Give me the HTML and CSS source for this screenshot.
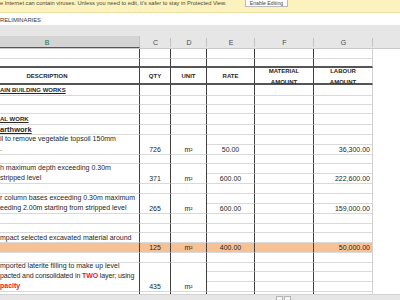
FILE: index.html
```html
<!DOCTYPE html>
<html>
<head>
<meta charset="utf-8">
<link rel="stylesheet" href="styles.css">
</head>
<body>
<div class="msgbar">
  <span class="msg">e Internet can contain viruses. Unless you need to edit, it's safer to stay in Protected View.</span>
  <span class="btn">Enable Editing</span>
</div>
<div class="fbar">RELIMINARIES</div>
<div class="band"></div>
<div class="colhdr">
  <div class="ch sel">B</div><div class="ch">C</div><div class="ch">D</div><div class="ch">E</div><div class="ch">F</div><div class="ch">G</div>
</div>
<div class="sheet">
  <div class="grid">
    <div></div><div></div><div></div><div></div><div></div><div class="g"></div>
    <div class="tb"></div><div class="tb"></div><div class="tb"></div><div class="tb"></div><div class="tb"></div><div class="tb g"></div>
    <div class="h tb">DESCRIPTION</div><div class="h tb">QTY</div><div class="h tb">UNIT</div><div class="h tb">RATE</div><div class="h tb">MATERIAL<br>AMOUNT</div><div class="h tb g">LABOUR<br>AMOUNT</div>

    <div class="d sec">AIN BUILDING WORKS</div><div></div><div></div><div></div><div></div><div class="g"></div>
    <div></div><div></div><div></div><div></div><div></div><div class="g"></div>
    <div></div><div></div><div></div><div></div><div></div><div class="g"></div>
    <div class="d sec">AL WORK</div><div></div><div></div><div></div><div></div><div class="g"></div>
    <div class="d sec big">arthwork</div><div></div><div></div><div></div><div></div><div class="g"></div>

    <div class="d s2 col"><p>il to remove vegetable topsoil 150mm</p><p>.</p></div><div class="s2">726</div><div class="s2">m²</div><div></div><div></div><div class="g"></div>
    <div>50.00</div><div></div><div class="g r">36,300.00</div>
    <div></div><div></div><div></div><div></div><div></div><div class="g"></div>

    <div class="d s2 col"><p>h maximum depth exceeding 0.30m</p><p>stripped level</p></div><div class="s2">371</div><div class="s2">m²</div><div></div><div></div><div class="g"></div>
    <div>600.00</div><div></div><div class="g r">222,600.00</div>
    <div></div><div></div><div></div><div></div><div></div><div class="g"></div>

    <div class="d s2 col"><p>r column bases exceeding 0.30m maximum</p><p>eeding 2.00m starting from stripped level</p></div><div class="s2">265</div><div class="s2">m²</div><div></div><div></div><div class="g"></div>
    <div>600.00</div><div></div><div class="g r">159,000.00</div>

    <div></div><div></div><div></div><div></div><div></div><div class="g"></div>
    <div></div><div></div><div></div><div></div><div></div><div class="g"></div>
    <div class="d">mpact selected excavated material around</div><div></div><div></div><div></div><div></div><div class="g"></div>
    <div class="d or"></div><div class="or">125</div><div class="or">m²</div><div class="or">400.00</div><div class="or"></div><div class="or g r">50,000.00</div>
    <div></div><div></div><div></div><div></div><div></div><div class="g"></div>

    <div class="d s3 col"><p>mported laterite filling to make up level</p><p class="tight">pacted and consolidated in <b class="red">TWO</b> layer; using</p><p><b class="red">pacity</b></p></div><div class="s3">435</div><div class="s3">m²</div><div></div><div></div><div class="g"></div>
    <div></div><div></div><div class="g"></div>
    <div></div><div></div><div class="g"></div>
    <div></div><div></div><div></div><div></div><div></div><div class="g"></div>
  </div>
</div>
<div class="bottombar"><span class="sb"></span><span class="sb"></span></div>
</body>
</html>
```
FILE: styles.css
```css
html, body {
  margin: 0;
  padding: 0;
  width: 400px;
  height: 300px;
  overflow: hidden;
  background: #ffffff;
  font-family: "Liberation Sans", Arial, sans-serif;
}

.msgbar {
  height: 13px;
  background: #fcf2bd;
  display: flex;
  align-items: flex-start;
  overflow: hidden;
  box-sizing: border-box;
  border-bottom: 1px solid #ece0a6;
}

.msg {
  font-size: 5.7px;
  line-height: 6px;
  margin-top: 0;
  color: #4a4a3a;
  white-space: nowrap;
  text-decoration: underline;
  width: 245px;
  flex: none;
  overflow: hidden;
}

.btn {
  flex: none;
  width: 43px;
  height: 8px;
  margin-top: -1px;
  box-sizing: border-box;
  background: #ffffff;
  border: 1px solid #b9b9b9;
  font-size: 5.2px;
  line-height: 6px;
  color: #444;
  text-align: center;
  white-space: nowrap;
}

.fbar {
  height: 12px;
  background: #ffffff;
  font-size: 5.8px;
  line-height: 15px;
  color: #3a3a3a;
  white-space: nowrap;
  overflow: hidden;
}

.band {
  height: 11px;
  background: #e6e6e6;
}

.colhdr {
  height: 13px;
  background: #e6e6e6;
  display: grid;
  grid-template-columns: 185px 31px 36px 48px 59px 59px 1fr;
  margin-left: -45px;
  box-sizing: border-box;
  border-bottom: 1px solid #c9c9c9;
}

.ch {
  font-size: 7px;
  color: #4a4a4a;
  display: flex;
  align-items: center;
  justify-content: center;
  padding-top: 1px;
  background: linear-gradient(#c2c2c2, #c2c2c2) right 2px / 1px 9px no-repeat;
}

.ch.sel {
  background: #d4d4d4;
  color: #1f6b42;
  box-sizing: border-box;
  border-bottom: 1px solid #217346;
  border-right: 1px solid #c2c2c2;
}

.sheet {
  height: 245px;
  overflow: hidden;
  background: #ffffff;
}

.grid {
  margin-left: -45px;
  width: 418px;
  display: grid;
  grid-template-columns: 185px 31px 36px 48px 59px 59px;
  grid-template-rows: 10px 9px 17px 11px 9px 9px 11px 10px 10px 10px 9px 10px 10px 10px 10px 10px 10px 9px 10px 10px 10px 9px 10px 10px 10px;
}

.grid > div {
  box-sizing: border-box;
  border-right: 1px solid #3f3f3f;
  border-bottom: 1px solid #d9d9d9;
  font-size: 7px;
  line-height: 9.5px;
  color: #262626;
  display: flex;
  align-items: flex-end;
  justify-content: center;
  white-space: nowrap;
  overflow: visible;
}

.grid > div.g {
  border-right-color: #d2d2d2;
}

.grid > div.tb {
  border-bottom: 2px solid #555555;
}

.grid > div.h {
  font-size: 6px;
  font-weight: bold;
  align-items: center;
  text-align: center;
  line-height: 10.5px;
  padding-top: 2px;
}

.grid > div.d {
  justify-content: flex-start;
  padding-left: 45px;
}

.grid > div.col {
  flex-direction: column;
  justify-content: flex-end;
  align-items: flex-start;
  line-height: 10px;
}

.col p {
  margin: 0;
}

.col p.tight {
  letter-spacing: -0.12px;
}

.grid > div.r {
  justify-content: flex-end;
  padding-right: 2px;
}

.grid > div.sec {
  font-weight: bold;
  font-size: 6px;
  text-decoration: underline;
}

.grid > div.big {
  font-size: 7.5px;
}

.s2 {
  grid-row: span 2;
}

.s3 {
  grid-row: span 3;
}

.grid > div.or {
  background: #f7c196;
}

.red {
  color: #f0141e;
  font-weight: bold;
}

.bottombar {
  height: 6px;
  box-sizing: border-box;
  background: #e6e6e6;
  border-top: 1px solid #d2d2d2;
  display: flex;
  align-items: flex-start;
  padding-left: 276px;
  padding-top: 1px;
  gap: 1px;
}

.sb {
  width: 7px;
  height: 6px;
  box-sizing: border-box;
  background: #f4f4f4;
  border: 1px solid #b3b3b3;
}
```
